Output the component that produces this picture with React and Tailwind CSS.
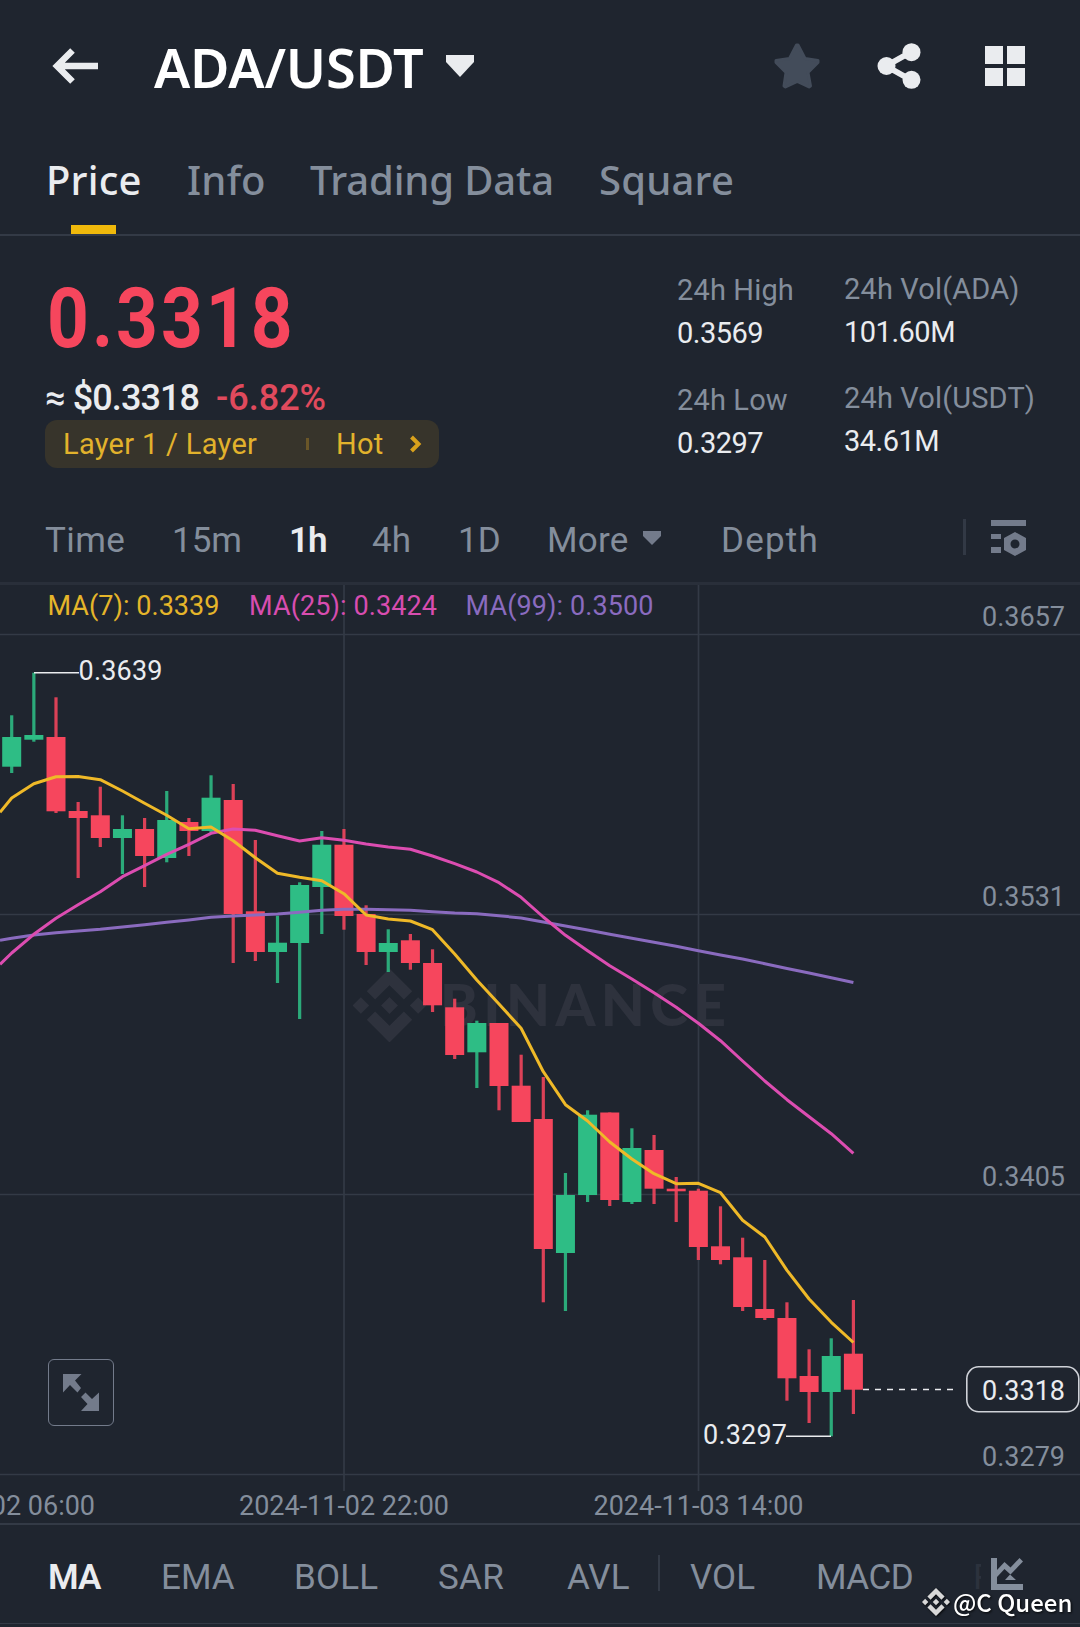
const TABS = [
  { label: "Price", active: true, className: "w-[141px] tracking-[0.2px]" },
  { label: "Info", className: "w-[123px] tracking-[0.2px]" },
  { label: "Trading Data", className: "w-[289px] tracking-[-0.15px]" },
  { label: "Square", className: "w-[140px] tracking-[0.2px]" },
];

const STATS = [
  {
    className: "w-[167px] pt-[33px] gap-[24px]",
    items: [
      { label: "24h High", value: "0.3569" },
      { label: "24h Low", value: "0.3297" },
    ],
  },
  {
    className: "w-[236px] pt-[32px] gap-[23px]",
    items: [
      { label: "24h Vol(ADA)", value: "101.60M" },
      { label: "24h Vol(USDT)", value: "34.61M" },
    ],
  },
];

const INTERVALS = [
  { label: "Time", className: "w-[127px] tracking-[0.4px]" },
  { label: "15m", className: "w-[117px]" },
  { label: "1h", active: true, className: "w-[83px] tracking-[-1px]" },
  { label: "4h", className: "w-[86px]" },
  { label: "1D", className: "w-[89px]" },
];

const INDICATORS = [
  { label: "MA", active: true, className: "w-[113px] tracking-[-1px]" },
  { label: "EMA", className: "w-[133px]" },
  { label: "BOLL", className: "w-[144px] tracking-[0.2px]" },
  { label: "SAR", className: "w-[129px] tracking-[0.3px]" },
  { label: "AVL", className: "w-[91px]" },
];

// [direction, high, body top, body bottom, low] in chart units
const CANDLES = [
  ["up", 715.3, 737, 766.7, 773],
  ["up", 672.7, 735, 739.7, 741.7],
  ["down", 697.3, 737, 811.3, 813],
  ["down", 802, 811, 818, 878],
  ["down", 786.7, 815.3, 838, 847],
  ["up", 815.3, 829, 838, 874],
  ["down", 818, 829, 856, 887],
  ["up", 791, 820, 858, 862.3],
  ["down", 818, 822, 831, 856],
  ["up", 775.3, 797.7, 831, 832.7],
  ["down", 784, 800, 914, 963],
  ["down", 840, 911.3, 952, 961],
  ["up", 915.7, 942.7, 952, 983],
  ["up", 882.3, 885, 943, 1019],
  ["up", 831, 844.7, 887, 934],
  ["down", 829, 844.7, 916, 929.7],
  ["down", 905.3, 914, 952, 965],
  ["up", 929.3, 943, 952, 972],
  ["down", 934, 940.3, 963, 969.7],
  ["down", 949.3, 963, 1005.3, 1012],
  ["down", 998.7, 1007.3, 1055, 1059],
  ["up", 1020.7, 1023, 1052.3, 1088],
  ["down", 1023, 1023, 1086, 1110.3],
  ["down", 1054.7, 1085.7, 1122, 1122],
  ["down", 1077, 1119, 1249, 1302.3],
  ["up", 1173, 1195, 1253, 1311],
  ["up", 1110.3, 1114.7, 1195, 1202],
  ["down", 1112.5, 1112.5, 1200, 1206],
  ["up", 1128.3, 1148, 1202, 1204],
  ["down", 1135, 1150, 1188.7, 1204],
  ["down", 1177, 1188.7, 1191.3, 1222],
  ["down", 1188.7, 1190.7, 1247, 1260],
  ["down", 1206.3, 1246.3, 1260, 1264.3],
  ["down", 1237.7, 1257.3, 1307, 1311],
  ["down", 1260, 1309, 1318, 1320],
  ["down", 1302.3, 1318, 1378.3, 1400.7],
  ["down", 1349.3, 1376, 1392, 1423],
  ["up", 1338.3, 1356, 1392, 1436.3],
  ["down", 1300, 1353.7, 1389.7, 1414],
];

// Moving averages, first value sits on the left edge
const MA7 = [
  812.3, 798, 783.7, 776.7, 776.5, 779.7, 791, 803.3, 815.3, 828.7, 827, 840.7, 857.7, 873.3,
  877.3, 880.7, 893.7, 915, 919, 921, 929.7, 954, 980, 1004, 1028.3, 1071.7, 1104.7, 1121, 1142,
  1159, 1173.7, 1183.7, 1183.3, 1192.7, 1220.3, 1237, 1270.3, 1299, 1322.3, 1342.5,
];
const MA25 = [
  964.3, 953, 934.3, 918.3, 904.7, 891.7, 876.7, 865.7, 854.3, 844.3, 833.3, 829, 830.3, 835.7,
  841, 837.7, 840.3, 844, 847, 849.3, 856, 863.7, 872, 882.7, 897.3, 917, 935.3, 950.7, 965.7,
  979, 992.7, 1007.3, 1023.3, 1040.7, 1061, 1081, 1099.7, 1116.7, 1133.7, 1153.3,
];
const MA99 = [
  940.3, 938.3, 935, 932.7, 931, 929.3, 927, 924.7, 922.3, 920, 917.3, 916, 915, 914, 912.3,
  910.3, 909.3, 909.3, 909.7, 910.3, 911.7, 913, 913.7, 915.7, 918, 922, 926, 930, 934.3, 938.3,
  942.3, 946.3, 950.7, 955, 959, 963.7, 968.5, 973, 977.7, 982.5,
];

const GRID_ROWS = [
  { y: 634.5, label: "0.3657" },
  { y: 914.5, label: "0.3531" },
  { y: 1194.5, label: "0.3405" },
  { y: 1474.5, label: "0.3279" },
];

const candleX = (i) => 11.7 + i * 22.15;

const toPoints = (values) =>
  values.map((y, i) => `${i === 0 ? 0 : candleX(i - 1).toFixed(1)},${y}`).join(" ");

const BinanceMark = ({ className }) => (
  <svg viewBox="0 0 126.6 126.6" className={className} fill="currentColor">
    <path d="M38.7 53.2 63.3 28.6 87.9 53.2 102.2 38.9 63.3 0 24.4 38.9zM0 63.3 14.3 49 28.6 63.3 14.3 77.6zM38.7 73.4 63.3 98 87.9 73.4 102.2 87.7 63.3 126.6 24.4 87.7zM98 63.3 112.3 49 126.6 63.3 112.3 77.6zM77.8 63.3 63.3 48.8 48.8 63.3 63.3 77.8z" />
  </svg>
);

const Header = () => (
  <header className="flex h-[132px] items-center pl-[52px] pr-[55px]">
    <svg width="47" height="36" viewBox="0 0 47 36" fill="none" stroke="#eaecef" strokeWidth="6.5">
      <path d="M46 18H5M20.5 2.5 5 18l15.5 15.5" />
    </svg>
    <h1 className="ml-[55px] w-[292px] whitespace-nowrap pt-[1px] font-['Noto_Sans',sans-serif] text-[54px] leading-[60px] font-semibold tracking-[-0.2px] text-white">
      ADA/USDT
    </h1>
    <svg width="28" height="22" viewBox="0 0 28 22" fill="#eaecef">
      <path d="M0 0h28v7L14 22 0 7z" />
    </svg>
    <div className="ml-auto flex items-center">
      <svg width="46" height="46" viewBox="0 0 46 46" fill="#434c5a" stroke="#434c5a" strokeWidth="3" strokeLinejoin="round">
        <path d="M22.500 2h1.500l7 13.500 13 2v2L34 29.500l2.500 13.500-1.500 1-11.700-5.500L11.500 44 10 43l2-13.500L2 19.500v-2l13.500-2z" />
      </svg>
      <svg className="ml-[57px]" width="44" height="46" viewBox="0 0 44 46" fill="#eaecef">
        <path d="M9 23 34 9M9 23l25 14" stroke="#eaecef" strokeWidth="6" />
        <circle cx="9.500" cy="23" r="9" />
        <circle cx="34.500" cy="9.200" r="9" />
        <circle cx="34.500" cy="36.800" r="9" />
      </svg>
      <div className="ml-[64px] grid grid-cols-2 gap-[4px]">
        <span className="size-[18px] bg-[#eaecef]" />
        <span className="size-[18px] bg-[#eaecef]" />
        <span className="size-[18px] bg-[#eaecef]" />
        <span className="size-[18px] bg-[#eaecef]" />
      </div>
    </div>
  </header>
);

const Tabs = () => (
  <nav className="flex h-[104px] border-b-2 border-[#333a46] pl-[46px] pt-[5px]">
    {TABS.map(({ label, active, className }) => (
      <div key={label} className={`flex flex-col whitespace-nowrap ${className}`}>
        <span
          className={`h-[88px] font-['Noto_Sans',sans-serif] text-[40px] leading-[86px] font-medium ${
            active ? "text-[#eaecef]" : "text-[#848e9c]"
          }`}
        >
          {label}
        </span>
        {active && <span className="ml-[25px] h-[9px] w-[45px] bg-[#f0b90b]" />}
      </div>
    ))}
  </nav>
);

const Summary = () => (
  <section className="flex h-[262px] justify-between">
    <div className="flex flex-col pl-[45px] pt-[34px]">
      <div className="ml-[2px] h-[96px] w-[290px] origin-left scale-x-[0.88] text-[83px] leading-[97px] font-bold tracking-[3.4px] text-[#f6465d]">
        0.3318
      </div>
      <div className="flex h-[54px] pt-[10px] text-[36px] leading-[45px] font-medium">
        <span className="w-[171px] whitespace-nowrap tracking-[-0.9px] text-[#eaecef]">≈ $0.3318</span>
        <span className="text-[#e04a5d]">-6.82%</span>
      </div>
      <div className="flex h-[48px] w-[394px] items-center rounded-[12px] bg-[#37342b] pl-[18px] text-[29px] text-[#e2b22c]">
        <span className="w-[243px] whitespace-nowrap pt-[2px] tracking-[0.3px]">Layer 1 / Layer</span>
        <span className="h-[12px] w-[3px] bg-[#6a5628]" />
        <span className="ml-[27px] w-[74px] pt-[2px] tracking-[0.3px]">Hot</span>
        <svg width="12" height="18" viewBox="0 0 12 18" fill="none" stroke="#d9a11c" strokeWidth="4">
          <path d="m1.500 2 7 7-7 7" />
        </svg>
      </div>
    </div>
    <div className="flex">
      {STATS.map(({ className, items }) => (
        <div key={items[0].label} className={`flex flex-col ${className}`}>
          {items.map(({ label, value }) => (
            <dl key={label} className="whitespace-nowrap text-[29px] leading-[43px]">
              <dt className="tracking-[0.15px] text-[#848e9c]">{label}</dt>
              <dd className="tracking-[-0.5px] text-[#eaecef]">{value}</dd>
            </dl>
          ))}
        </div>
      ))}
    </div>
  </section>
);

const IntervalBar = () => (
  <div className="flex h-[87px] items-center border-b-[3px] border-[#292f3a] pl-[45px] text-[35px] text-[#848e9c]">
    {INTERVALS.map(({ label, active, className }) => (
      <span key={label} className={`pt-[2px] ${className} ${active ? "font-semibold text-[#eaecef]" : ""}`}>
        {label}
      </span>
    ))}
    <span className="w-[96px] pt-[2px] tracking-[0.2px]">More</span>
    <svg className="-mt-[5px]" width="18" height="14" viewBox="0 0 18 14" fill="#737b8b">
      <path d="M0 0h18v5l-9 9-9-9z" />
    </svg>
    <span className="ml-[60px] w-[242px] pt-[2px] tracking-[1.2px]">Depth</span>
    <span className="-mt-[6px] h-[36px] w-[3px] bg-[#323945]" />
    <svg className="-mt-[4px] ml-[25px]" width="35" height="36" viewBox="0 0 35 36" fill="#737b8b">
      <path d="M0 0h35v6H0zM0 14h10v5H0zM0 27h10v6H0z" />
      <path fillRule="evenodd" d="M24 12 35 18v12l-11 6-11-6V18zM24 19.500a4.500 4.500 0 1 0 0 9 4.500 4.500 0 0 0 0-9z" />
    </svg>
  </div>
);

const Chart = () => (
  <section className="relative h-[940px] border-b-2 border-[#333a46]">
    <svg
      width="1080"
      height="938"
      viewBox="0 585 1080 938"
      className="block font-[Roboto,sans-serif] text-[27px]"
    >
      {/* Grid */}
      <g stroke="#333a46" strokeWidth="1.300">
        {GRID_ROWS.map(({ y }) => (
          <path key={y} d={`M0 ${y}H1080`} />
        ))}
        <path d="M344 585V1491M698.500 585V1491" strokeWidth="1.700" />
      </g>

      {/* Watermark */}
      <g className="text-[#2e323d]" fill="currentColor">
        <svg x="352.500" y="968.500" width="74" height="74">
          <BinanceMark className="size-full" />
        </svg>
        <text x="440" y="1025.700" textLength="286" className="font-[Lato,sans-serif] text-[57px] font-black">
          BINANCE
        </text>
      </g>

      {/* Candles */}
      {CANDLES.map(([direction, high, top, bottom, low], i) => (
        <g key={i} fill={direction === "up" ? "#2ebd85" : "#f6465d"}>
          <rect x={candleX(i) - 1.6} y={high} width="3.2" height={low - high} opacity="0.88" />
          <rect x={candleX(i) - 9.5} y={top} width="19" height={bottom - top} />
        </g>
      ))}

      <g fill="none" strokeWidth="3" strokeLinejoin="round">
        <polyline points={toPoints(MA99)} stroke="#8a6bbf" />
        <polyline points={toPoints(MA25)} stroke="#dc4db1" />
        <polyline points={toPoints(MA7)} stroke="#efb928" />
      </g>

      {/* High / low markers */}
      <g stroke="#eaecef" strokeWidth="1.500">
        <path d="M34 672.700H79M786 1436.300H831" />
        <path d="M863 1389.400H954" strokeDasharray="6 6" />
      </g>
      <g fill="#eaecef">
        <text x="78.500" y="680" textLength="84">0.3639</text>
        <text x="703" y="1444" textLength="84">0.3297</text>
      </g>

      {/* Legend */}
      <text x="47.500" y="615" fill="#e5b52a" textLength="172">MA(7): 0.3339</text>
      <text x="249" y="615" fill="#d84db0" textLength="188">MA(25): 0.3424</text>
      <text x="465.500" y="615" fill="#8a6bbf" textLength="188">MA(99): 0.3500</text>

      {/* Axes */}
      <g fill="#848e9c">
        {GRID_ROWS.map(({ y, label }) => (
          <text key={label} x="982" y={y - 8.5} textLength="83">
            {label}
          </text>
        ))}
        <text x="95" y="1514.700" textAnchor="end" textLength="210">2024-11-02 06:00</text>
        <text x="239" y="1514.700" textLength="210">2024-11-02 22:00</text>
        <text x="593.500" y="1514.700" textLength="210">2024-11-03 14:00</text>
      </g>

      {/* Last price */}
      <rect x="966.800" y="1366.800" width="112" height="45" rx="12" fill="#1f252f" stroke="#cfd2d8" strokeWidth="1.600" />
      <text x="982" y="1400" fill="#eaecef" textLength="83">0.3318</text>
    </svg>

    <button className="absolute top-[774px] left-[48px] flex h-[67px] w-[66px] items-center justify-center rounded-[6px] border border-[#737b8b]">
      <svg width="36" height="37" viewBox="0 0 36 37" fill="#737b8b">
        <path d="M0 0h18.500l-6.500 6.500 6 7.500-3.500 4.500L7 11l-7 7.500zM36 37H18l6.500-7-6.500-7 4.500-4.500 6.500 6.500 7-6.500z" />
      </svg>
    </button>
  </section>
);

const IndicatorBar = () => (
  <footer className="relative flex h-[99px] items-center border-b border-[#333a46] pl-[48px] text-[35px] text-[#848e9c]">
    {INDICATORS.map(({ label, active, className }) => (
      <span key={label} className={`pt-[8px] ${className} ${active ? "font-semibold text-[#eaecef]" : ""}`}>
        {label}
      </span>
    ))}
    <span className="-mt-[2px] h-[36px] w-[2px] bg-[#333a46]" />
    <span className="ml-[30px] w-[126px] pt-[8px]">VOL</span>
    <span className="w-[157px] pt-[8px] tracking-[-0.5px]">MACD</span>
    <span className="w-[8px] overflow-hidden pt-[8px] text-[#2c323d]">R</span>
    <svg className="ml-[10px]" width="32" height="32" viewBox="0 0 32 32" fill="#848e9c">
      <path d="M0 0h6v12L13.500 4l6 5.500L28.500 0 32 3.500 19.500 16.500l-6-5.500L6 19v7h26v6H0zM19 16.500 25 22H14z" />
    </svg>
    <div className="absolute top-[61px] right-[8px] flex items-center text-white drop-shadow-[1px_1px_1px_rgba(0,0,0,0.8)]">
      <BinanceMark className="size-[28px] text-[#d8d8d8]" />
      <span className="ml-[3px] w-[119px] whitespace-nowrap font-['Noto_Sans_CJK_SC',sans-serif] text-[24px] leading-[32px] font-medium">
        @C Queen
      </span>
    </div>
  </footer>
);

export default function App() {
  return (
    <div className="h-[1627px] w-[1080px] overflow-hidden bg-[#1f252f] font-[Roboto,sans-serif]">
      <Header />
      <Tabs />
      <Summary />
      <IntervalBar />
      <Chart />
      <IndicatorBar />
    </div>
  );
}
